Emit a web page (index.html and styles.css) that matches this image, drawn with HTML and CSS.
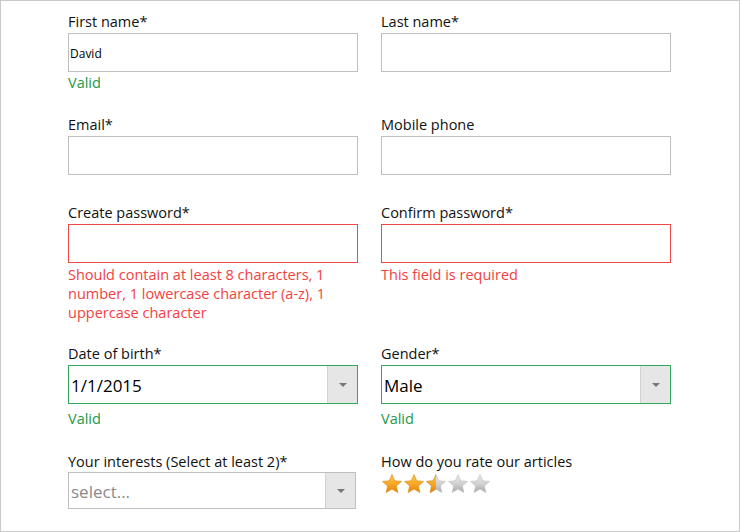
FILE: index.html
```html
<!DOCTYPE html>
<html lang="en">
<head>
<meta charset="utf-8">
<title>Registration form</title>
<link rel="stylesheet" href="styles.css">
</head>
<body>
<div class="frame">
  <form class="form">
    <div class="row row--first">
      <div class="field">
        <label class="label">First name*</label>
        <input class="input" type="text" value="David">
        <div class="msg msg--valid msg--first">Valid</div>
      </div>
      <div class="field">
        <label class="label">Last name*</label>
        <input class="input" type="text">
      </div>
    </div>

    <div class="row row--plain">
      <div class="field">
        <label class="label">Email*</label>
        <input class="input" type="text">
      </div>
      <div class="field">
        <label class="label">Mobile phone</label>
        <input class="input" type="text">
      </div>
    </div>

    <div class="row row--errors">
      <div class="field">
        <label class="label">Create password*</label>
        <input class="input input--error" type="password">
        <div class="msg msg--error">Should contain at least 8 characters, 1 number, 1 lowercase character (a-z), 1 uppercase character</div>
      </div>
      <div class="field">
        <label class="label">Confirm password*</label>
        <input class="input input--error" type="password">
        <div class="msg msg--error">This field is required</div>
      </div>
    </div>

    <div class="row row--selects">
      <div class="field">
        <label class="label label--select">Date of birth*</label>
        <div class="dropdown dropdown--valid">
          <span class="dropdown__value">1/1/2015</span>
          <span class="dropdown__btn"><span class="dropdown__caret"></span></span>
        </div>
        <div class="msg msg--valid msg--after-select">Valid</div>
      </div>
      <div class="field">
        <label class="label label--select">Gender*</label>
        <div class="dropdown dropdown--valid">
          <span class="dropdown__value">Male</span>
          <span class="dropdown__btn"><span class="dropdown__caret"></span></span>
        </div>
        <div class="msg msg--valid msg--after-select">Valid</div>
      </div>
    </div>

    <div class="row row--last">
      <div class="field">
        <label class="label label--tight">Your interests (Select at least 2)*</label>
        <div class="dropdown dropdown--multi">
          <span class="dropdown__value dropdown__value--placeholder">select...</span>
          <span class="dropdown__btn"><span class="dropdown__caret"></span></span>
        </div>
      </div>
      <div class="field">
        <label class="label">How do you rate our articles</label>
        <svg class="stars" width="110" height="20" viewBox="0 0 110 20" aria-label="Rating 2.5 of 5">
          <defs>
            <linearGradient id="gold" x1="0" y1="0" x2="0" y2="1">
              <stop offset="0" stop-color="#ffcc48"/>
              <stop offset="0.55" stop-color="#f5a623"/>
              <stop offset="1" stop-color="#e2830c"/>
            </linearGradient>
            <linearGradient id="grey" x1="0" y1="0" x2="0" y2="1">
              <stop offset="0" stop-color="#ececec"/>
              <stop offset="0.55" stop-color="#cfcfcf"/>
              <stop offset="1" stop-color="#a8a8a8"/>
            </linearGradient>
            <path id="star" d="M10 0.5 L12.7 6.78 L19.5 7.41 L14.37 11.92 L15.88 18.59 L10 15.1 L4.12 18.59 L5.63 11.92 L0.5 7.41 L7.3 6.78 Z"/>
            <clipPath id="half"><rect x="0" y="0" width="10" height="20"/></clipPath>
          </defs>
          <g transform="translate(0,0)"><use href="#star" fill="url(#gold)" stroke="#d9870f" stroke-width="0.6" stroke-linejoin="round"/></g>
          <g transform="translate(22,0)"><use href="#star" fill="url(#gold)" stroke="#d9870f" stroke-width="0.6" stroke-linejoin="round"/></g>
          <g transform="translate(44,0)">
            <use href="#star" fill="url(#grey)" stroke="#bdbdbd" stroke-width="0.6" stroke-linejoin="round"/>
            <use href="#star" fill="url(#gold)" stroke="#d9870f" stroke-width="0.6" stroke-linejoin="round" clip-path="url(#half)"/>
          </g>
          <g transform="translate(66,0)"><use href="#star" fill="url(#grey)" stroke="#bdbdbd" stroke-width="0.6" stroke-linejoin="round"/></g>
          <g transform="translate(88,0)"><use href="#star" fill="url(#grey)" stroke="#bdbdbd" stroke-width="0.6" stroke-linejoin="round"/></g>
        </svg>
      </div>
    </div>
  </form>
</div>
</body>
</html>
```

FILE: styles.css
```css
* {
  box-sizing: border-box;
}

html,
body {
  margin: 0;
  padding: 0;
  background: #ffffff;
}

body {
  font-family: "Open Sans", "DejaVu Sans", sans-serif;
  font-size: 14.5px;
  color: #111111;
}

.frame {
  width: 740px;
  height: 532px;
  border: 1px solid #c9c9c9;
  padding: 11px 68px 0 67px;
  overflow: hidden;
}

.form {
  margin: 0;
}

.row {
  display: grid;
  grid-template-columns: 290px 290px;
  column-gap: 23px;
  align-items: start;
  margin-bottom: 24px;
}

.row--first {
  margin-bottom: 23px;
}

.row--plain {
  margin-bottom: 28px;
}

.row--errors {
  margin-bottom: 22px;
}

.row--selects {
  margin-bottom: 24px;
}

.row--last {
  margin-bottom: 0;
}

.field {
  display: flex;
  flex-direction: column;
  align-items: flex-start;
}

.label {
  display: block;
  line-height: 20px;
  margin-bottom: 1px;
  white-space: nowrap;
}

.label--tight {
  margin-bottom: 0;
}

.input {
  display: block;
  width: 290px;
  height: 39px;
  margin: 0;
  border: 1px solid #bfbfbf;
  border-radius: 0;
  padding: 2px 0 0 1px;
  font-family: "Open Sans", "DejaVu Sans", sans-serif;
  font-size: 12px;
  color: #000000;
  background: #ffffff;
  outline: none;
}

.input--error {
  border-color: #f24848;
}

.msg {
  line-height: 19px;
}

.msg--first {
  margin-top: 1px;
}

.msg--valid {
  color: #25984a;
}

.msg--error {
  color: #f23f3f;
  margin-top: 2px;
}

.msg--after-select {
  margin-top: 5px;
}

.dropdown {
  display: flex;
  width: 290px;
  height: 39px;
  border: 1px solid #bfbfbf;
  background: #ffffff;
}

.dropdown--valid {
  border-color: #32a85a;
}

.dropdown--multi {
  width: 288px;
  height: 37px;
}

.dropdown__value {
  flex: 1;
  padding: 3px 0 0 2px;
  font-size: 17px;
  line-height: 34px;
  color: #000000;
  white-space: nowrap;
}

.dropdown__value--placeholder {
  padding-top: 2px;
  line-height: 33px;
  color: #8a8a8a;
}

.dropdown__btn {
  width: 30px;
  display: flex;
  align-items: center;
  justify-content: center;
  background: #e6e6e6;
  border-left: 1px solid #d2d2d2;
}

.dropdown__caret {
  width: 0;
  height: 0;
  border-left: 4px solid transparent;
  border-right: 4px solid transparent;
  border-top: 4px solid #777777;
}

.stars {
  display: block;
  margin: 1px 0 0 1px;
}
```
